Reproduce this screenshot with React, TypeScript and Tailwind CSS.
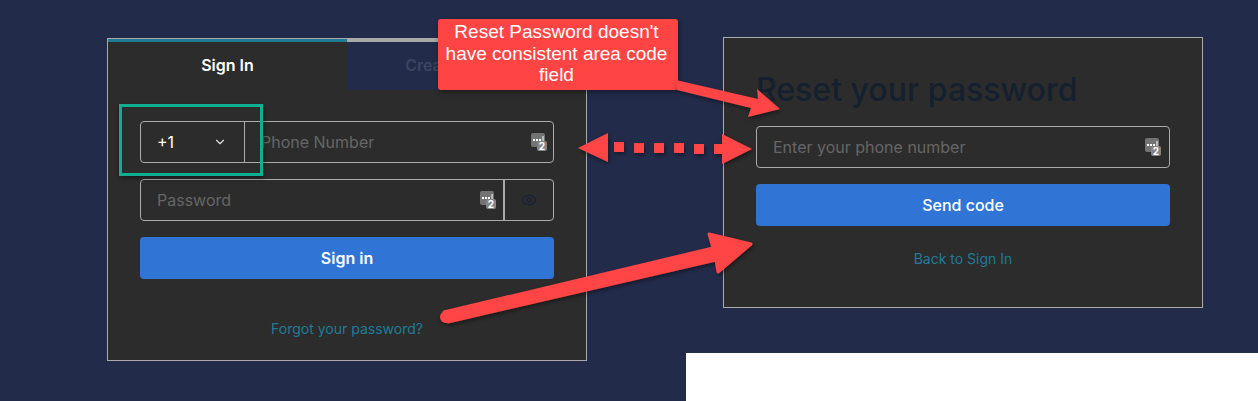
import React from 'react';
import { ChevronDown, Eye } from 'lucide-react';

const PasswordManagerIcon = () => (
  <svg width="16" height="18" viewBox="0 0 16 18" className="shrink-0 overflow-visible">
    <rect x="0" y="0" width="14" height="14" rx="2" fill="#737373" />
    <rect x="2" y="6" width="2" height="2" fill="#fff" />
    <rect x="5" y="6" width="2" height="2" fill="#fff" />
    <rect x="8" y="6" width="2" height="2" fill="#fff" />
    <rect x="11.5" y="3" width="1" height="5" fill="#fff" />
    <rect x="6" y="8" width="10" height="10" rx="2" fill="#858585" />
    <text x="11" y="16.6" textAnchor="middle" fontSize="10" fontWeight="700" fill="#fff" fontFamily="Inter, sans-serif">2</text>
  </svg>
);

const Annotations = () => (
  <svg width="1258" height="401" viewBox="0 0 1258 401" className="absolute left-0 top-0 pointer-events-none">
    <defs>
      <filter id="shadow" x="-10%" y="-30%" width="120%" height="160%">
        <feDropShadow dx="1" dy="2" stdDeviation="2" floodColor="#000" floodOpacity="0.45" />
      </filter>
    </defs>
    <g fill="#ff4444" filter="url(#shadow)">
      <polygon points="676,80 677,90 751,108 748,117 780,109 757,89 758,99" />
      <polygon points="578,148 608,133 608,162" />
      <rect x="614" y="142" width="10" height="10" />
      <rect x="634" y="143" width="10" height="10" />
      <rect x="654" y="143" width="10" height="10" />
      <rect x="674" y="143" width="10" height="10" />
      <rect x="694" y="144" width="10" height="10" />
      <rect x="714" y="144" width="9" height="10" />
      <polygon points="722,134 752,149 722,164" />
      <polygon
        points="444,312 448,322 716,260 718,272 751,244 709,234 713,248"
        stroke="#ff4444"
        strokeWidth="3"
        strokeLinejoin="round"
      />
      <circle cx="446" cy="317" r="6" />
    </g>
  </svg>
);

const App = () => {
  return (
    <div className="relative w-[1258px] h-[401px] overflow-hidden bg-[#232b4a] font-['Inter',sans-serif] flex">
      {/* Sign in card */}
      <div className="ml-[107px] mt-[38px] w-[480px] h-[323px] border border-[#aaaaaa] bg-[#2c2c2c] flex flex-col">
        <div className="flex h-[51px] shrink-0">
          <div className="w-[239px] border-t-[3px] border-[#1f7a94] pb-[2px] flex items-center justify-center text-white font-semibold text-base">
            Sign In
          </div>
          <div className="flex-1 border-t-[3px] border-[#a9a9a9] bg-[#232b4a] pb-[2px] pr-[2px] flex items-center justify-center text-[#3b4560] font-semibold text-base">
            Create Account
          </div>
        </div>
        <div className="px-8 pt-[31px] flex flex-col gap-4">
          <div className="flex h-[42px] border border-[#aaaaaa] rounded">
            <div className="w-[104px] border-r border-[#aaaaaa] flex items-center justify-between pl-4 pr-[17px] text-white text-base">
              +1
              <ChevronDown size={14} strokeWidth={2} className="text-[#dddddd]" />
            </div>
            <div className="flex-1 flex items-center justify-between pl-4 pr-[6px] text-[#666666] text-base">
              Phone Number
              <PasswordManagerIcon />
            </div>
          </div>
          <div className="flex h-[42px] border border-[#aaaaaa] rounded">
            <div className="w-[364px] border-r-2 border-[#aaaaaa] flex items-center justify-between pl-4 pr-[7px] text-[#666666] text-base">
              Password
              <PasswordManagerIcon />
            </div>
            <div className="flex-1 flex items-center justify-center text-[#1a2238]">
              <Eye size={16} strokeWidth={2} />
            </div>
          </div>
          <div className="h-[42px] rounded bg-[#3075d6] flex items-center justify-center text-white font-semibold text-base">
            Sign in
          </div>
          <div className="mt-[24px] text-center text-sm text-[#217b98]">Forgot your password?</div>
        </div>
      </div>

      {/* Reset password column */}
      <div className="ml-[99px] w-[572px] pl-[37px] pt-[37px] flex flex-col">
        <div className="w-[480px] h-[271px] border border-[#aaaaaa] bg-[#2c2c2c] px-8 pt-[31px] flex flex-col">
          <h1 className="text-[32px] leading-[42px] font-medium text-[#15202f] whitespace-nowrap">Reset your password</h1>
          <div className="mt-[15px] h-[42px] border border-[#aaaaaa] rounded flex items-center justify-between pl-4 pr-[8px] text-[#666666] text-base">
            Enter your phone number
            <PasswordManagerIcon />
          </div>
          <div className="mt-4 h-[42px] rounded bg-[#3075d6] flex items-center justify-center text-white font-medium text-base">
            Send code
          </div>
          <div className="mt-[23px] text-center text-sm text-[#217b98]">Back to Sign In</div>
        </div>
        <div className="-ml-[37px] mt-[45px] h-[48px] bg-white" />
      </div>

      {/* Green highlight over the area code field */}
      <div className="absolute left-[119px] top-[104px] w-[144px] h-[72px] border-[3px] border-[#0eae90] shadow-[1px_2px_5px_rgba(0,0,0,0.45)]" />

      {/* Callout */}
      <div className="absolute left-[438px] top-[19px] w-[240px] h-[71px] rounded-[3px] bg-[#ff4444] shadow-[1px_2px_5px_rgba(0,0,0,0.4)] text-white text-center text-[19px] leading-[21.5px] font-['Liberation_Sans',sans-serif] pt-[2px] pl-[2px] pr-[5px]">
        Reset Password doesn't have consistent area code field
      </div>

      <Annotations />
    </div>
  );
};

export default App;
